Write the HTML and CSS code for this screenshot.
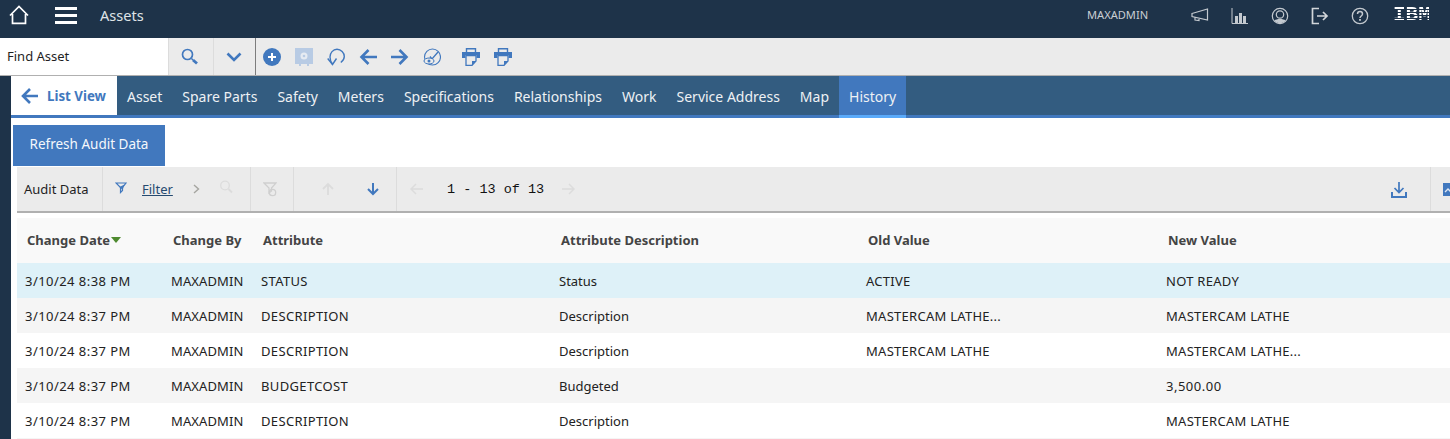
FILE: index.html
```html
<!DOCTYPE html>
<html lang="en">
<head>
<meta charset="utf-8">
<title>Assets</title>
<link rel="stylesheet" href="styles.css">
</head>
<body>
<header class="topbar">
  <div class="top-left">
    <svg class="home" width="20" height="20" viewBox="0 0 20 20"><path d="M1 10.500 10 1.500l9 9M3.500 9v9.300h13V9" fill="none" stroke="#fff" stroke-width="1.700"/></svg>
    <div class="burger"><span></span><span></span><span></span></div>
    <span class="app-title">Assets</span>
  </div>
  <div class="top-right">
    <span class="user">MAXADMIN</span>
    <div class="top-icons">
      <svg width="18" height="16" viewBox="0 0 18 16"><path d="M1 6.500 16.500 2v11L1 9.500zM4 10.500v2.500l4 .6v-2.300" fill="none" stroke="#c3c9cf" stroke-width="1.200"/></svg>
      <svg width="18" height="18" viewBox="0 0 18 18"><path d="M1 1v15.500h16" fill="none" stroke="#c3c9cf" stroke-width="1"/><path d="M4 9h3v7H4zM8 6h3v10H8zM12 9h3v7h-3z" fill="#c3c9cf"/></svg>
      <svg width="18" height="18" viewBox="0 0 18 18"><circle cx="9" cy="9" r="7.700" fill="none" stroke="#c3c9cf" stroke-width="1.200"/><circle cx="9" cy="7.500" r="3.700" fill="none" stroke="#c3c9cf" stroke-width="1.200"/><path d="M3.500 13.500c2-2 9-2 11 0-2.500 3.500-8.500 3.500-11 0z" fill="#c3c9cf"/></svg>
      <svg width="18" height="18" viewBox="0 0 18 18"><path d="M8 1.500H1.500v15H8M6 9h10M12 5l4 4-4 4" fill="none" stroke="#d2d6da" stroke-width="1.700"/></svg>
      <svg width="18" height="18" viewBox="0 0 18 18"><circle cx="9" cy="9" r="7.700" fill="none" stroke="#c3c9cf" stroke-width="1.300"/><path d="M6.500 7c0-3.300 5-3.300 5 0 0 2-2.500 2-2.500 4" fill="none" stroke="#c3c9cf" stroke-width="1.500"/><rect x="8.100" y="12" width="1.800" height="1.800" fill="#c3c9cf"/></svg>
    </div>
    <span class="ibm">IBM</span>
  </div>
</header>

<div class="actionbar">
  <div class="find">Find Asset</div>
  <div class="find-btn find-search">
    <svg width="18" height="18" viewBox="0 0 18 18"><circle cx="6.500" cy="6.500" r="5" fill="none" stroke="#4178be" stroke-width="1.700"/><path d="m10.500 10.500 1.500 1.500" stroke="#4178be" stroke-width="1.500"/><path d="m12 12 4 3.500" stroke="#4178be" stroke-width="2.800"/></svg>
  </div>
  <div class="find-btn find-more">
    <svg width="16" height="10" viewBox="0 0 16 10"><path d="m1.500 1.500 6.500 6.500 6.500-6.500" fill="none" stroke="#4178be" stroke-width="2.600"/></svg>
  </div>
  <div class="actions">
    <svg width="18" height="18" viewBox="0 0 18 18"><circle cx="9" cy="9" r="9" fill="#4178be"/><path d="M9 5v8M5 9h8" stroke="#fff" stroke-width="2"/></svg>
    <svg width="18" height="18" viewBox="0 0 18 18"><path d="M0 0h18v16h-4v2h-2v-2H6v2H4v-2H0z" fill="#b8cbe4"/><circle cx="9" cy="8" r="3.500" fill="#e6ebf2"/><circle cx="9" cy="8" r="1.300" fill="#b8cbe4"/></svg>
    <svg width="18" height="18" viewBox="0 0 18 18"><path d="M5.500 16C3 13 3 10.500 3 9c0-4 3-7.700 7-7.700S17.300 5 17.300 8.500c0 2.500-1.500 4.500-3.500 6" fill="none" stroke="#4178be" stroke-width="1.400"/><path d="m.7 10.500 4.800 6 4-6" fill="none" stroke="#4178be" stroke-width="1.400"/></svg>
    <svg width="18" height="16" viewBox="0 0 18 16"><path d="M18 8H3M9.500 1 2.500 8l7 7" fill="none" stroke="#4178be" stroke-width="2.600"/></svg>
    <svg width="18" height="16" viewBox="0 0 18 16"><path d="M0 8h15M8.500 1l7 7-7 7" fill="none" stroke="#4178be" stroke-width="2.600"/></svg>
    <svg width="18" height="18" viewBox="0 0 18 18"><circle cx="9.500" cy="9" r="8" fill="none" stroke="#4178be" stroke-width="1.100"/><path d="m7 8.500 2 2.500 6-7" fill="none" stroke="#4178be" stroke-width="1.300"/><ellipse cx="6" cy="13" rx="5" ry="3" fill="#ebebeb" stroke="#4178be" stroke-width="1"/><circle cx="6" cy="13" r="1.500" fill="#4178be"/></svg>
    <div class="prints">
      <svg width="18" height="18" viewBox="0 0 18 18"><path d="M4.500 4.500V.7h9v3.800" fill="none" stroke="#4178be" stroke-width="1.400"/><path d="M0 4h18v6h-3.500V7h-11v3H0z" fill="#4178be"/><path d="M4 7.500h10V13l-4 4.300H4z" fill="#ebebeb" stroke="#4178be" stroke-width="1.300"/><path d="M14 13h-4v4.500z" fill="#4178be"/></svg>
      <svg width="18" height="18" viewBox="0 0 18 18"><path d="M4.500 4.500V.7h9v3.800" fill="none" stroke="#4178be" stroke-width="1.400"/><path d="M0 4h18v6h-3.500V7h-11v3H0z" fill="#4178be"/><path d="M4 7.500h10V13l-4 4.300H4z" fill="#ebebeb" stroke="#4178be" stroke-width="1.300"/><path d="M14 13h-4v4.500z" fill="#4178be"/></svg>
    </div>
  </div>
</div>

<div class="page">
  <aside class="rail"></aside>
  <main class="main">
    <nav class="tabs">
      <a class="tab-back">
        <svg width="17" height="16" viewBox="0 0 17 16"><path d="M17 8H3M9 1 2 8l7 7" fill="none" stroke="#4178be" stroke-width="2.600"/></svg>
        <span>List View</span>
      </a>
      <a class="tab">Asset</a>
      <a class="tab">Spare Parts</a>
      <a class="tab">Safety</a>
      <a class="tab">Meters</a>
      <a class="tab">Specifications</a>
      <a class="tab">Relationships</a>
      <a class="tab">Work</a>
      <a class="tab">Service Address</a>
      <a class="tab">Map</a>
      <a class="tab tab-active">History</a>
    </nav>

    <div class="content">
      <button class="refresh">Refresh Audit Data</button>
      <section class="panel">
        <div class="tbar">
          <div class="tbar-sec sec-title">Audit Data</div>
          <div class="tbar-sec sec-filter">
            <svg class="ico-filter" width="12" height="12" viewBox="0 0 12 12"><path d="M1 1h10L7.500 5.500v3L5.500 10.500V5.500z" fill="none" stroke="#4178be" stroke-width="1.200"/><path d="M4.500 5 9.500 2.500 7.500 8z" fill="#4178be"/></svg>
            <a class="filter-link">Filter</a>
            <svg class="ico-chev" width="7" height="10" viewBox="0 0 7 10"><path d="m1 1 4.500 4L1 9" fill="none" stroke="#a5a5a0" stroke-width="1.400"/></svg>
            <svg class="ico-find" width="14" height="14" viewBox="0 0 14 14"><circle cx="6" cy="5.500" r="4.300" fill="none" stroke="#dcdcdc" stroke-width="1.300"/><path d="m9.500 9 3.500 3.500" stroke="#dcdcdc" stroke-width="1.800"/></svg>
          </div>
          <div class="tbar-sec sec-clear">
            <svg width="14" height="15" viewBox="0 0 14 15"><path d="M1 1h12L8.500 6v3L6 11V6z" fill="none" stroke="#cfcfcf" stroke-width="1.300"/><circle cx="9.500" cy="10.500" r="3.200" fill="none" stroke="#cfcfcf" stroke-width="1.300"/></svg>
          </div>
          <div class="tbar-sec sec-sort">
            <svg width="14" height="14" viewBox="0 0 14 14"><path d="M7 13V2M2 7l5-5 5 5" fill="none" stroke="#dcdcdc" stroke-width="1.800"/></svg>
            <svg width="14" height="14" viewBox="0 0 14 14"><path d="M7 1v11M2 7l5 5 5-5" fill="none" stroke="#4178be" stroke-width="2"/></svg>
          </div>
          <div class="tbar-sec sec-pager">
            <svg width="14" height="12" viewBox="0 0 14 12"><path d="M14 6H2M7 1 2 6l5 5" fill="none" stroke="#dcdcdc" stroke-width="1.500"/></svg>
            <span class="count">1 - 13 of 13</span>
            <svg width="14" height="12" viewBox="0 0 14 12"><path d="M0 6h12M7 1l5 5-5 5" fill="none" stroke="#dcdcdc" stroke-width="1.500"/></svg>
            <svg class="ico-download" width="16" height="16" viewBox="0 0 16 16"><path d="M8 0v10M3.500 6 8 10.500 12.500 6" fill="none" stroke="#4178be" stroke-width="1.700"/><path d="M1 10v5h14v-5" fill="none" stroke="#4178be" stroke-width="2"/></svg>
          </div>
          <div class="tbar-sec sec-chart">
            <svg width="14" height="13" viewBox="0 0 14 13"><rect width="14" height="13" fill="#4178be"/><path d="m2 9 3-3 2 2 4-4" fill="none" stroke="#dfe7f2" stroke-width="1.400"/></svg>
          </div>
        </div>
        <table class="grid">
          <colgroup>
            <col class="c1"><col class="c2"><col class="c3"><col class="c4"><col class="c5"><col class="c6">
          </colgroup>
          <thead>
            <tr>
              <th>Change Date<span class="sort"></span></th>
              <th>Change By</th>
              <th>Attribute</th>
              <th>Attribute Description</th>
              <th>Old Value</th>
              <th>New Value</th>
            </tr>
          </thead>
          <tbody>
            <tr class="sel"><td>3/10/24 8:38 PM</td><td>MAXADMIN</td><td>STATUS</td><td>Status</td><td>ACTIVE</td><td>NOT READY</td></tr>
            <tr><td>3/10/24 8:37 PM</td><td>MAXADMIN</td><td>DESCRIPTION</td><td>Description</td><td>MASTERCAM LATHE...</td><td>MASTERCAM LATHE</td></tr>
            <tr><td>3/10/24 8:37 PM</td><td>MAXADMIN</td><td>DESCRIPTION</td><td>Description</td><td>MASTERCAM LATHE</td><td>MASTERCAM LATHE...</td></tr>
            <tr><td>3/10/24 8:37 PM</td><td>MAXADMIN</td><td>BUDGETCOST</td><td>Budgeted</td><td></td><td class="num">3,500.00</td></tr>
            <tr><td>3/10/24 8:37 PM</td><td>MAXADMIN</td><td>DESCRIPTION</td><td>Description</td><td></td><td>MASTERCAM LATHE</td></tr>
            <tr><td></td><td></td><td></td><td></td><td></td><td></td></tr>
          </tbody>
        </table>
      </section>
    </div>
  </main>
</div>
</body>
</html>
```

FILE: styles.css
```css
* { box-sizing: border-box; }
html, body { margin: 0; height: 439px; overflow: hidden; background: #fff; }
body { font-family: "Noto Sans", "Open Sans", sans-serif; font-size: 13px; color: #1f1f1f; }
svg { display: block; flex: none; }

.topbar { height: 38px; background: #1e3349; display: flex; justify-content: space-between; color: #fff; }
.top-left { display: flex; align-items: center; padding-left: 9px; }
.home { margin-bottom: 8px; }
.burger { margin-left: 26px; margin-bottom: 7px; width: 22px; display: flex; flex-direction: column; gap: 4px; }
.burger span { height: 3px; background: #fff; }
.app-title { margin-left: 23px; margin-bottom: 9px; font-size: 14.600px; color: #dfe3e7; }
.top-right { display: flex; align-items: flex-start; }
.user { margin-top: 7px; font-size: 11.100px; color: #c9ced3; width: 104px; }
.top-icons { display: flex; gap: 22px; margin-top: 7px; }
.ibm { margin: 4px 21px 0 24px; width: 36px; height: 21px; font: 700 21px/21px "Liberation Mono", monospace; color: transparent; background: repeating-linear-gradient(#fff 0 2px, #1e3349 2px 3px); -webkit-background-clip: text; background-clip: text; }

.actionbar { height: 38px; background: #ebebeb; border-bottom: 1px solid #b0b0b0; display: flex; }
.find { width: 168px; background: #fff; padding: 9px 0 0 7px; font-size: 13px; line-height: 18px; }
.find-btn { display: flex; align-items: center; justify-content: center; border-left: 1px solid #dcdcdc; }
.find-search { width: 45px; padding-right: 2px; }
.find-more { width: 42px; padding-right: 2px; }
.actions { flex: 1; display: flex; align-items: center; gap: 14px; padding-left: 7px; border-left: 1px solid #7d7d7d; }
.prints { display: flex; gap: 14px; margin-left: 7px; }

.page { display: flex; height: 363px; }
.rail { width: 11px; background: #1e3349; }
.main { flex: 1; min-width: 0; overflow: hidden; }

.tabs { display: flex; height: 42px; background: #335c80; border-bottom: 3px solid #4178be; }
.tab { padding: 2px 10px 0; display: flex; align-items: center; color: #eef1f4; font-size: 14px; }
.tab-back { width: 106px; background: #fff; display: flex; align-items: center; gap: 9px; padding-left: 10px; color: #4178be; font-weight: 700; font-size: 13.300px; }
.tab-active { background: #4178be; box-shadow: 0 3px 0 #5aaafa; }

.content { padding-top: 7px; }
.refresh { display: block; margin-left: 2px; width: 152px; height: 41px; border: 0; background: #4178be; color: #f4f7fb; font: 13.500px "Noto Sans", sans-serif; padding: 0 0 3px; }

.panel { margin: 1px 0 0 6px; width: 1500px; }
.tbar { height: 46px; background: #ebebeb; border-bottom: 2px solid #b0b0b0; display: flex; }
.tbar-sec { display: flex; align-items: center; border-right: 1px solid #dcdcdc; }
.sec-title { width: 86px; padding-left: 7px; font-size: 13px; }
.sec-filter { width: 148px; padding-left: 12px; }
.ico-filter { margin-bottom: 3px; }
.filter-link { margin-left: 15px; color: #264a70; text-decoration: underline; font-size: 13px; }
.ico-chev { margin: 0 0 0 20px; }
.ico-find { margin: 0 0 4px 19px; }
.sec-clear { width: 43px; padding-left: 12px; }
.sec-sort { width: 103px; padding-left: 27px; gap: 31px; }
.sec-pager { width: 1034px; padding: 0 23px 0 12px; }
.count { margin: 1px 18px 0 24px; font: 13.500px "Liberation Mono", monospace; color: #111; }
.ico-download { margin: 1px 0 0 auto; }
.sec-chart { padding-left: 12px; border: 0; }

.grid { border-collapse: collapse; table-layout: fixed; width: 1433px; margin-top: 5px; }
.c1 { width: 146px; } .c2 { width: 90px; } .c3 { width: 298px; } .c4 { width: 307px; } .c5 { width: 300px; }
th { height: 45px; background: #f9f9f9; text-align: left; padding: 0 0 2px 10px; font-size: 13px; font-weight: 700; color: #444; }
td { height: 35px; padding: 0 0 0 8px; font-size: 13px; color: #222; background: #fff; white-space: nowrap; }
td:nth-child(1) { letter-spacing: .45px; }
td:nth-child(2) { letter-spacing: .1px; }
td:nth-child(3) { letter-spacing: .35px; }
td:nth-child(5), td:nth-child(6) { letter-spacing: .27px; }
td.num { letter-spacing: .5px; }
tbody tr:nth-child(even) td { background: #f5f5f5; }
tbody tr.sel td { background: #def1f8; }
.sort { display: inline-block; margin-left: 1px; vertical-align: 2px; border: 5px solid transparent; border-top: 6px solid #4e8a2f; border-bottom: 0; }
```
